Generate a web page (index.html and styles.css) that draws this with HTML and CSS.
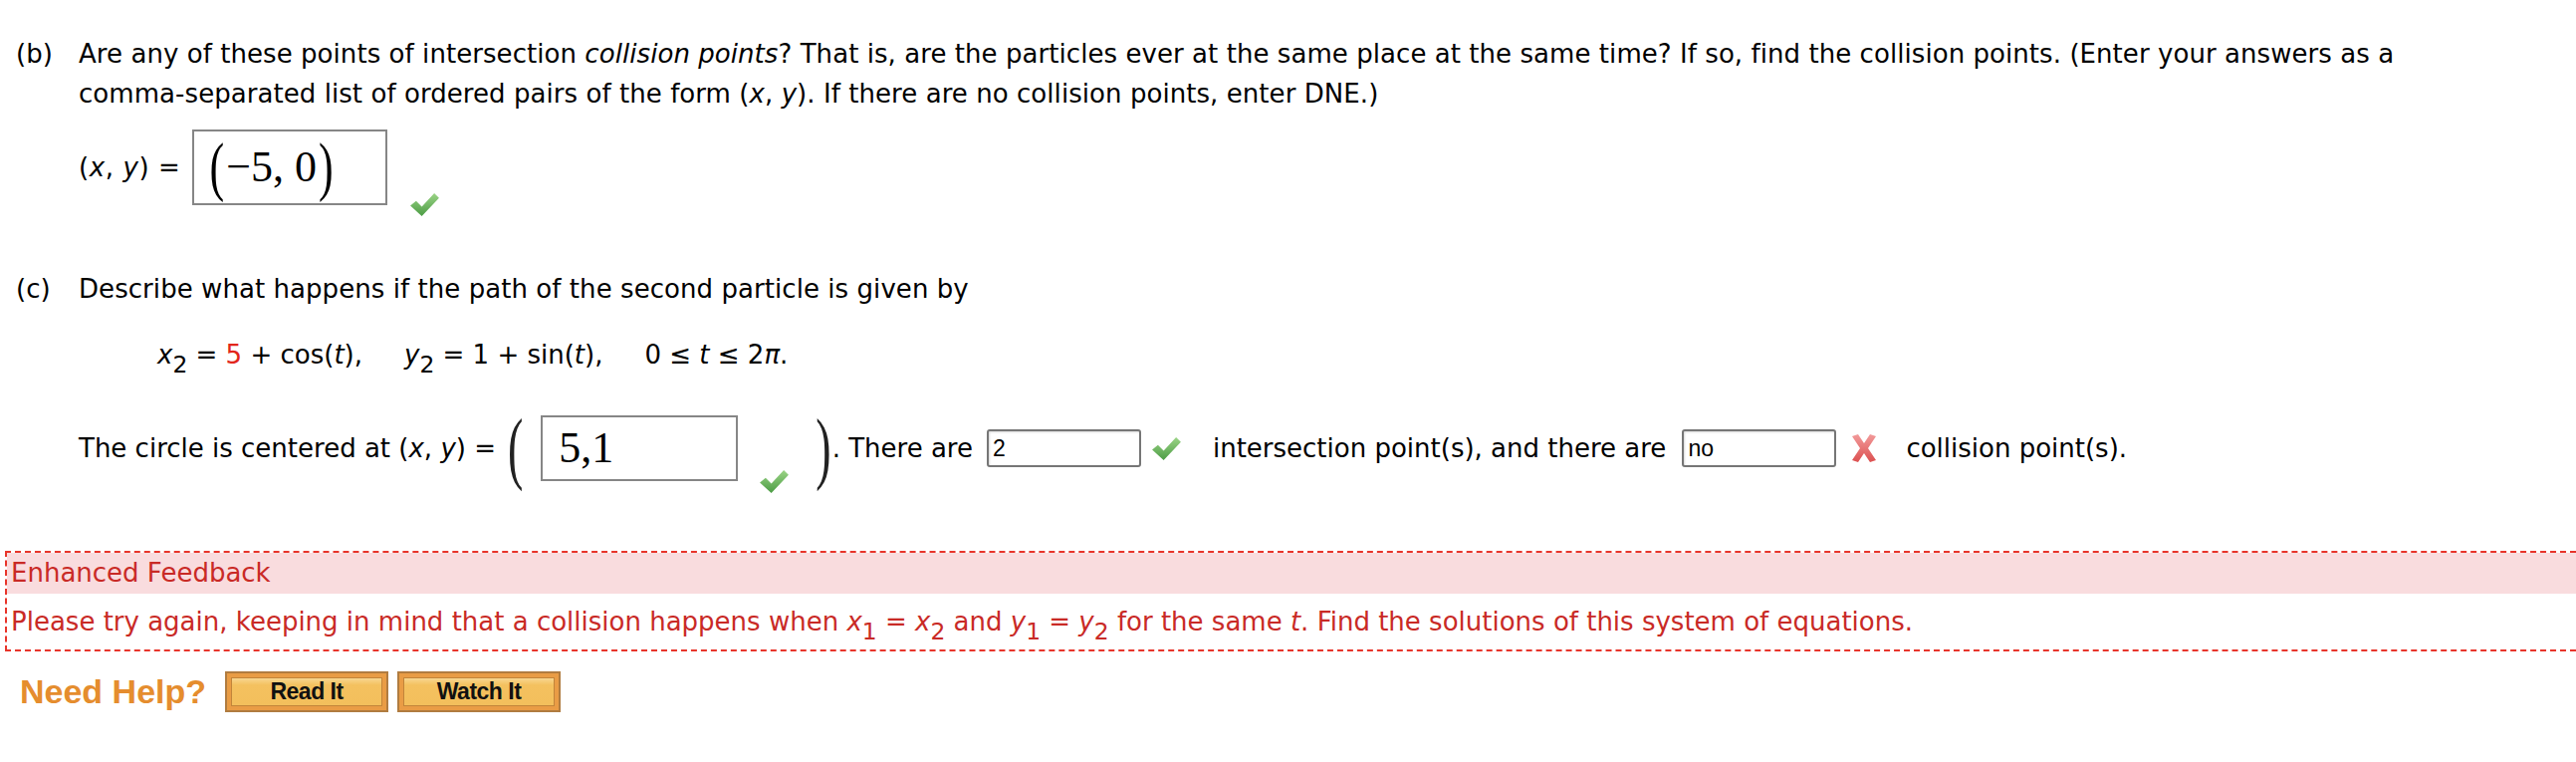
FILE: index.html
```html
<!DOCTYPE html>
<html>
<head>
<meta charset="utf-8">
<link rel="stylesheet" href="styles.css">
</head>
<body>
<div class="page">
  <div class="part part-b">
    <span class="label">(b)</span>
    <div class="body">
      <p class="q">Are any of these points of intersection <em>collision points</em>? That is, are the particles ever at the same place at the same time? If so, find the collision points. (Enter your answers as a<br>comma-separated list of ordered pairs of the form (<i>x</i>, <i>y</i>). If there are no collision points, enter DNE.)</p>
      <div class="answer-row">
        <span class="lbl">(<i>x</i>, <i>y</i>) =</span>
        <div class="mathbox"><span class="paren">(</span><span class="mval">−5, 0</span><span class="paren">)</span></div>
        <svg class="check check-low" viewBox="0 0 32 26" width="33" height="25"><defs><linearGradient id="g1" x1="0" y1="0" x2="0" y2="1"><stop offset="0" stop-color="#9bd486"/><stop offset="1" stop-color="#4c9c45"/></linearGradient></defs><path d="M1 14 L7 9 L13 15 L26 1 L31 6 L13 25 Z" fill="url(#g1)"/></svg>
      </div>
    </div>
  </div>

  <div class="part part-c">
    <span class="label">(c)</span>
    <div class="body">
      <p class="q">Describe what happens if the path of the second particle is given by</p>
      <p class="eq"><i>x</i><sub>2</sub> = <span class="red">5</span> + cos(<i>t</i>),<span class="sp"></span><i>y</i><sub>2</sub> = 1 + sin(<i>t</i>),<span class="sp"></span>0 ≤ <i>t</i> ≤ 2<i>π</i>.</p>
      <div class="circle-row">
        <span class="t1">The circle is centered at (<i>x</i>, <i>y</i>) =</span>
        <span class="bigparen">(</span>
        <div class="mathbox2">5,1</div>
        <svg class="check check-low2" viewBox="0 0 32 26" width="31" height="25"><defs><linearGradient id="g2" x1="0" y1="0" x2="0" y2="1"><stop offset="0" stop-color="#9bd486"/><stop offset="1" stop-color="#4c9c45"/></linearGradient></defs><path d="M1 14 L7 9 L13 15 L26 1 L31 6 L13 25 Z" fill="url(#g2)"/></svg>
        <span class="bigparen bp-close">)</span>
        <span class="t2">. There are</span>
        <span class="field">2</span>
        <svg class="check check-mid" viewBox="0 0 32 26" width="31" height="25"><defs><linearGradient id="g3" x1="0" y1="0" x2="0" y2="1"><stop offset="0" stop-color="#9bd486"/><stop offset="1" stop-color="#4c9c45"/></linearGradient></defs><path d="M1 14 L7 9 L13 15 L26 1 L31 6 L13 25 Z" fill="url(#g3)"/></svg>
        <span class="t3">intersection point(s), and there are</span>
        <span class="field field2">no</span>
        <svg class="xmark" viewBox="0 0 26 30" width="26" height="30"><defs><linearGradient id="g4" x1="0" y1="0" x2="0" y2="1"><stop offset="0" stop-color="#f29a9a"/><stop offset="1" stop-color="#dc5050"/></linearGradient></defs><path d="M1 3 L7 1 L13 10 L19 1 L25 3 L17 15 L25 27 L19 29 L13 20 L7 29 L1 27 L9 15 Z" fill="url(#g4)"/></svg>
        <span class="t4">collision point(s).</span>
      </div>
    </div>
  </div>

  <div class="feedback">
    <div class="fb-head">Enhanced Feedback</div>
    <div class="fb-body">Please try again, keeping in mind that a collision happens when <i>x</i><sub>1</sub> = <i>x</i><sub>2</sub> and <i>y</i><sub>1</sub> = <i>y</i><sub>2</sub> for the same <i>t</i>. Find the solutions of this system of equations.</div>
  </div>

  <div class="help">
    <span class="need">Need Help?</span>
    <span class="btn"><span class="btn-in">Read It</span></span>
    <span class="btn"><span class="btn-in">Watch It</span></span>
  </div>
</div>
</body>
</html>
```

FILE: styles.css
```css
* { box-sizing: border-box; }
html, body { margin: 0; padding: 0; background: #fff; }
body {
  font-family: "DejaVu Sans", Verdana, sans-serif;
  font-size: 26px;
  color: #000;
  overflow: hidden;
}
.page { padding-top: 34px; }

.part { display: flex; padding-left: 16px; line-height: 40px; }
.label { width: 63px; flex: none; }
.body { flex: 1; min-width: 0; }
.q { margin: 0; white-space: nowrap; letter-spacing: 0.06px; }
i, em { font-style: italic; }

sub { font-size: 90%; vertical-align: -0.4em; line-height: 0; }

.answer-row { display: flex; align-items: center; margin-top: 16px; height: 76px; }
.lbl { letter-spacing: 0.6px; }
.mathbox {
  width: 196px; height: 76px; margin-left: 12px;
  border: 2px solid #868686;
  font-family: "Liberation Serif", serif; font-size: 44px;
  padding-left: 15px; display: flex; align-items: center;
}
.paren { display: inline-block; transform: scaleY(1.5); }
.mval { margin: 0 2px; }

.check { flex: none; display: block; }
.check-low { align-self: flex-end; margin-left: 21px; margin-bottom: -12px; }

.part-c { margin-top: 64px; }
.eq { margin: 26px 0 0 0; padding-left: 79px; white-space: nowrap; }
.eq .sp { display: inline-block; width: 42px; }
.red { color: #e2261c; }

.circle-row { display: flex; align-items: center; height: 80px; margin-top: 34px; white-space: nowrap; }
.bigparen {
  font-family: "Liberation Serif", serif; font-size: 46px; line-height: 46px;
  display: inline-block; transform: scaleY(1.75); margin-left: 12px; color: #222;
}
.bp-close { margin-left: 26px; }
.mathbox2 {
  width: 198px; height: 66px; margin-left: 18px;
  border: 2px solid #868686;
  font-family: "Liberation Serif", serif; font-size: 44px;
  padding-left: 16px; display: flex; align-items: center;
}
.check-low2 { align-self: flex-end; margin-left: 21px; margin-bottom: -6px; }
.t2 { margin-left: 1px; }
.field {
  width: 155px; height: 38px; margin-left: 14px;
  border: 2px solid #767676; border-radius: 3px;
  box-shadow: inset 1px 1px 2px rgba(0,0,0,0.15);
  font-family: "Liberation Sans", Arial, sans-serif; font-size: 23px; line-height: 34px;
  padding-left: 4px;
}
.check-mid { margin-left: 10px; }
.t3 { margin-left: 31px; }
.field2 { margin-left: 16px; }
.xmark { margin-left: 15px; flex: none; }
.t4 { margin-left: 29px; }

.feedback {
  margin-top: 63px; margin-left: 5px;
  border: 2px dashed #e8352b; border-right: none;
  color: #c92a26;
}
.fb-head { background: #f9dcde; height: 41px; line-height: 41px; padding-left: 4px; }
.fb-body { height: 56px; line-height: 56px; padding-left: 4px; white-space: nowrap; }

.help { display: flex; align-items: center; margin-top: 20px; padding-left: 20px; height: 41px; }
.need {
  font-family: "Liberation Sans", Arial, sans-serif; font-weight: bold; font-size: 34px;
  color: #e58d2e; margin-right: 19px;
}
.btn {
  display: flex; width: 164px; height: 41px; margin-right: 9px;
  border: 2px solid #b07c40; background: #e99c45; padding: 4px;
}
.btn-in {
  flex: 1; display: flex; align-items: center; justify-content: center;
  border: 1px solid #c2853a;
  background: linear-gradient(#f8d690 0, #f4c15f 25%, #f3bf5c 100%);
  font-family: "Liberation Sans", Arial, sans-serif; font-weight: bold; font-size: 23px;
  letter-spacing: -0.5px; color: #111;
}
```
